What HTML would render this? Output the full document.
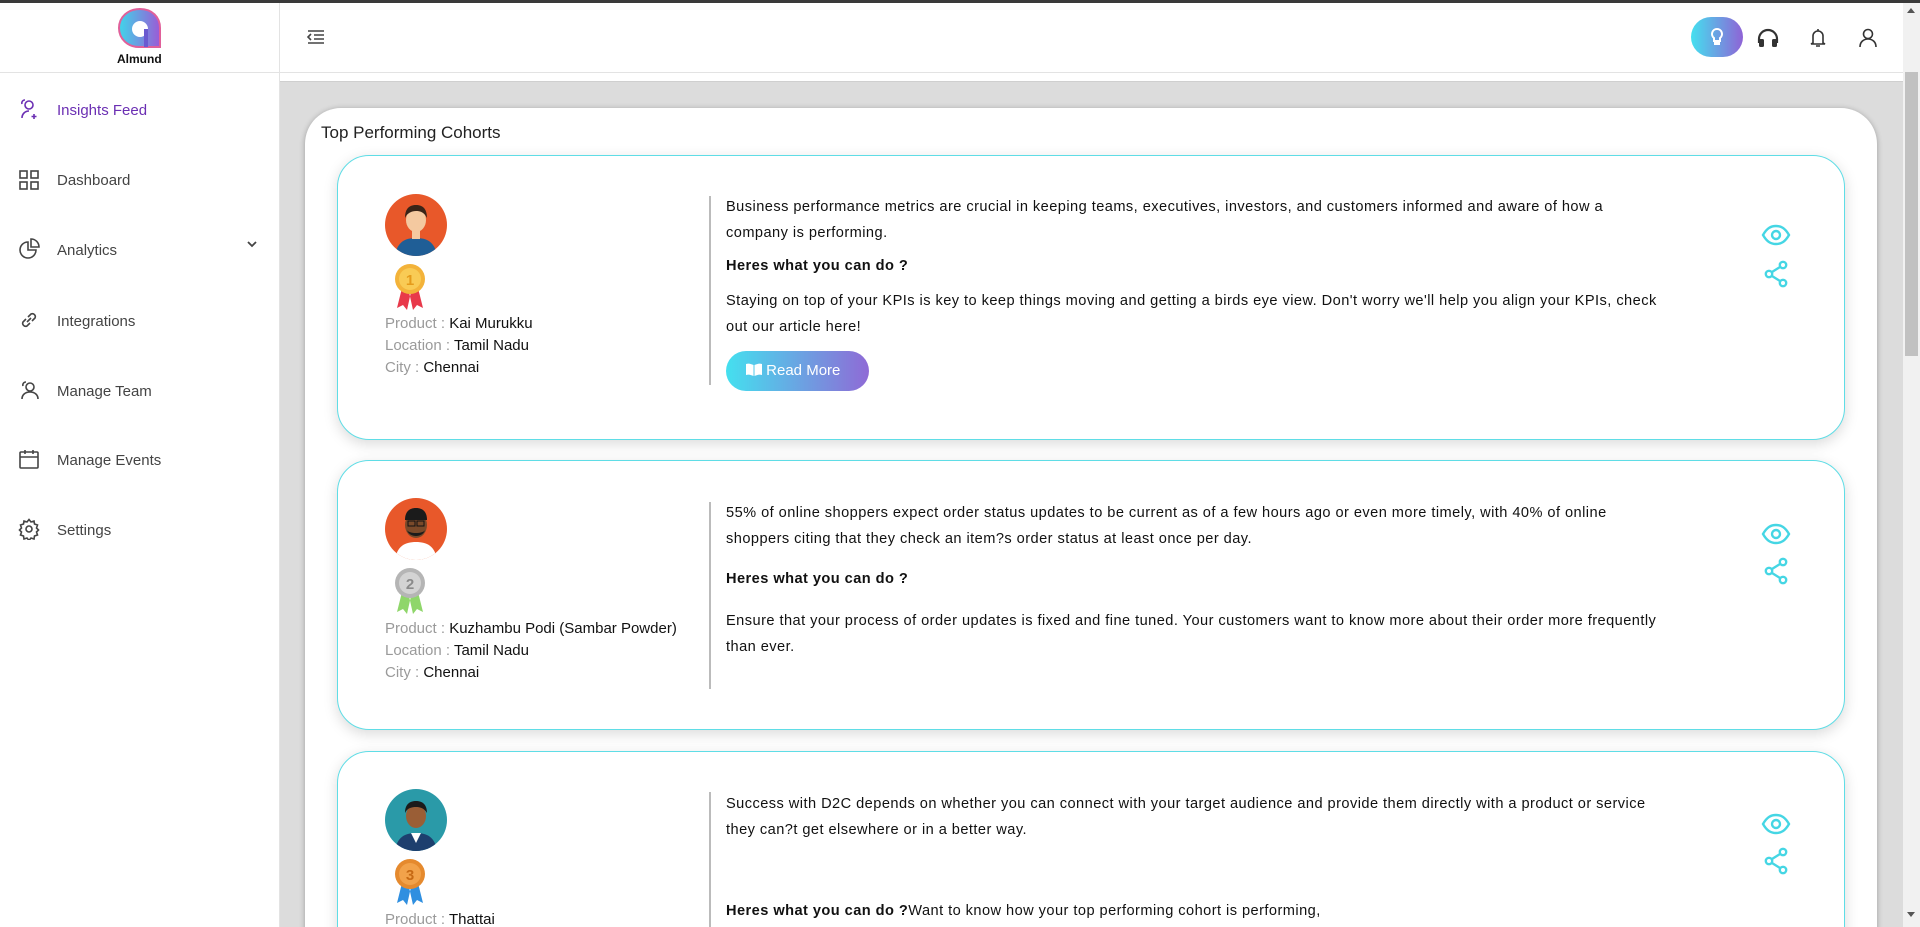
<!DOCTYPE html>
<html><head><meta charset="utf-8"><style>
*{margin:0;padding:0;box-sizing:border-box}
html,body{width:1920px;height:927px;overflow:hidden}
body{font-family:"Liberation Sans",sans-serif;background:#fff;position:relative;color:#222}
#w{position:absolute;left:0;top:0;width:1920px;height:927px;overflow:hidden}
.a{position:absolute}
.nav{position:absolute;left:57px;font-size:15px;color:#444;line-height:18px}
.ni{position:absolute;left:18px;width:22px;height:22px}
.card{position:absolute;left:337px;width:1508px;background:#fff;border:1.5px solid #5fdde6;border-radius:32px;box-shadow:0 4px 14px rgba(0,0,0,.15)}
.info{position:absolute;font-size:15px;line-height:22px;color:#111;white-space:nowrap}
.info span{color:#9a9a9a}
.txt{position:absolute;left:726px;font-size:14.6px;color:#111;white-space:nowrap;line-height:26px;letter-spacing:.45px}
.b{font-weight:bold}
.div{position:absolute;left:709px;width:1.5px;background:#bbb}
</style></head><body><div id="w">
<div class="a" style="left:0;top:0;width:1920px;height:3px;background:#3a3a3a"></div>
<div class="a" style="left:0;top:72px;width:1903px;height:1px;background:#e3e3e3"></div>
<div class="a" style="left:279px;top:3px;width:1px;height:924px;background:#e3e3e3"></div>
<svg class="a" style="left:116px;top:7px" width="48" height="46" viewBox="0 0 48 46">
<defs><linearGradient id="lg" x1="0" x2="1"><stop offset="0" stop-color="#3fd6ea"/><stop offset="1" stop-color="#9b5ad6"/></linearGradient></defs>
<path d="M24 2C12 2 3 10 3 21c0 11 9 19 20 19h21V21C44 10 36 2 24 2z" fill="url(#lg)" stroke="#e0609a" stroke-width="2"/>
<circle cx="24" cy="22" r="8" fill="#fff"/><rect x="28" y="22" width="4" height="18" fill="#6a5ad0"/>
</svg>
<div class="a" style="left:117px;top:52px;font-size:12px;font-weight:bold;color:#111">Almund</div>
<svg class="a" style="left:307px;top:30px" width="18" height="14" viewBox="0 0 18 14" stroke="#444" stroke-width="1.6" fill="none"><path d="M1 1h16M7 5h10M7 9h10M1 13h16M4 4L1 7l3 3"/></svg>
<div class="a" style="left:1691px;top:17px;width:52px;height:40px;border-radius:20px;background:linear-gradient(90deg,#44e0ef,#8f63d6)"></div>
<svg class="a" style="left:1709px;top:27px" width="16" height="20" viewBox="0 0 16 20"><path d="M8 2a5 5 0 0 0-3 9v3h6v-3a5 5 0 0 0-3-9z" fill="none" stroke="#fff" stroke-width="2"/><rect x="5" y="15" width="6" height="3" fill="#fff"/></svg>
<svg class="a" style="left:1757px;top:28px" width="22" height="20" viewBox="0 0 22 20"><path d="M2 15v-4a9 9 0 0 1 18 0v4" fill="none" stroke="#333" stroke-width="2.2"/><rect x="2" y="11" width="5" height="8" rx="1.5" fill="#333"/><rect x="15" y="11" width="5" height="8" rx="1.5" fill="#333"/></svg>
<svg class="a" style="left:1809px;top:28px" width="18" height="20" viewBox="0 0 18 20" fill="none" stroke="#333" stroke-width="1.6"><path d="M4 15V8a5 5 0 0 1 10 0v7l2 1H2zM7 18h4M9 1v2"/></svg>
<svg class="a" style="left:1858px;top:28px" width="20" height="20" viewBox="0 0 20 20" fill="none" stroke="#333" stroke-width="1.6"><circle cx="10" cy="6" r="4.5"/><path d="M2 19c0-5 3.5-8 8-8s8 3 8 8"/></svg>
<div class="a" style="left:1903px;top:3px;width:17px;height:924px;background:#f1f1f1"></div>
<div class="a" style="left:1905px;top:72px;width:13px;height:284px;background:#c1c1c1"></div>
<div class="a" style="left:1907px;top:8px;width:0;height:0;border-left:4px solid transparent;border-right:4px solid transparent;border-bottom:5px solid #555"></div>
<div class="a" style="left:1907px;top:912px;width:0;height:0;border-left:4px solid transparent;border-right:4px solid transparent;border-top:5px solid #555"></div>
<div class="a" style="left:280px;top:81px;width:1623px;height:846px;background:#dcdcdc;border-top:1px solid #cfcfcf"></div>
<div class="a" style="left:305px;top:108px;width:1572px;height:860px;background:#fff;border-radius:36px;box-shadow:0 1px 6px rgba(0,0,0,.3)"></div>
<div class="a" style="left:321px;top:123px;font-size:17px;color:#222">Top Performing Cohorts</div>
<svg class="ni" style="top:98px" viewBox="0 0 22 22" fill="none" stroke="#6b2fb3" stroke-width="1.6"><circle cx="11" cy="7" r="4"/><path d="M4 20c0-4 3-7 7-7M4 6a3 3 0 0 1 3-4M16 16v5M13.5 18.5h5"/></svg>
<div class="nav" style="top:102px;color:#6b2fb3">Insights Feed</div>
<svg class="ni" style="top:169px" viewBox="0 0 22 22" fill="none" stroke="#444" stroke-width="1.6"><rect x="2" y="2" width="7" height="7"/><rect x="13" y="2" width="7" height="7"/><rect x="2" y="13" width="7" height="7"/><rect x="13" y="13" width="7" height="7"/></svg>
<div class="nav" style="top:172px">Dashboard</div>
<svg class="ni" style="top:238px" viewBox="0 0 22 22" fill="none" stroke="#444" stroke-width="1.6"><path d="M10 4a8 8 0 1 0 8 8h-8z"/><path d="M13 1v8h8a8 8 0 0 0-8-8z"/></svg>
<div class="nav" style="top:242px">Analytics</div>
<svg class="a" style="left:247px;top:240px" width="10" height="8" viewBox="0 0 10 8" fill="none" stroke="#444" stroke-width="1.8"><path d="M1 2l4 4 4-4"/></svg>
<svg class="ni" style="top:309px" viewBox="0 0 22 22" fill="none" stroke="#444" stroke-width="1.6"><path d="M9 13l4-4M8 10l-3 3a3 3 0 0 0 4 4l3-3M14 12l3-3a3 3 0 0 0-4-4l-3 3"/></svg>
<div class="nav" style="top:313px">Integrations</div>
<svg class="ni" style="top:379px" viewBox="0 0 22 22" fill="none" stroke="#444" stroke-width="1.6"><circle cx="12" cy="8" r="4"/><path d="M4 20c0-4 3-7 8-7s8 3 8 7M5 7a3 3 0 0 1 3-4"/></svg>
<div class="nav" style="top:383px">Manage Team</div>
<svg class="ni" style="top:448px" viewBox="0 0 22 22" fill="none" stroke="#444" stroke-width="1.6"><rect x="2" y="4" width="18" height="16" rx="1"/><path d="M2 9h18M7 2v4M15 2v4"/></svg>
<div class="nav" style="top:452px">Manage Events</div>
<svg class="ni" style="top:518px" viewBox="0 0 22 22" fill="none" stroke="#444" stroke-width="1.6"><circle cx="11" cy="11" r="3"/><path d="M11 1.5l2 2.5 3-1 .5 3 3 1-1 3 2 2-2 2 1 3-3 1-.5 3-3-1-2 2.5-2-2.5-3 1-.5-3-3-1 1-3-2-2 2-2-1-3 3-1 .5-3 3 1z"/></svg>
<div class="nav" style="top:522px">Settings</div>

<div class="card" style="top:155px;height:285px"></div>
<svg class="a" style="left:385px;top:194px" width="62" height="62" viewBox="0 0 62 62"><clipPath id="c1"><circle cx="31" cy="31" r="31"/></clipPath><g clip-path="url(#c1)"><rect width="62" height="62" fill="#e8582a"/><path d="M10 62c2-14 10-18 21-18s19 4 21 18z" fill="#1f5e96"/><rect x="27" y="36" width="8" height="9" fill="#f4c9a0"/><ellipse cx="31" cy="26" rx="10" ry="12" fill="#f4c9a0"/><path d="M20 24c0-10 5-13 11-13s11 3 11 13c-3-6-7-7-11-7s-9 2-11 7z" fill="#3a2418"/></g></svg>
<svg class="a" style="left:394px;top:262px" width="32" height="50" viewBox="0 0 32 50"><path d="M8 26l-5 20 6-3 4 5 4-18zM24 26l5 20-6-3-4 5-4-18z" fill="#e8394a"/><circle cx="16" cy="17" r="15" fill="#f3b33a"/><circle cx="16" cy="17" r="11" fill="#f9cb55"/><text x="16" y="23" font-size="15" text-anchor="middle" fill="#e59b1b" font-family="Liberation Sans" font-weight="bold">1</text></svg>
<div class="info" style="left:385px;top:313px"><span>Product : </span>Kai Murukku<br><span>Location : </span>Tamil Nadu<br><span>City : </span>Chennai</div>
<div class="div" style="top:196px;height:189px"></div>
<div class="txt" style="top:194px">Business performance metrics are crucial in keeping teams, executives, investors, and customers informed and aware of how a<br>company is performing.</div>
<div class="txt b" style="top:253px">Heres what you can do ?</div>
<div class="txt" style="top:288px">Staying on top of your KPIs is key to keep things moving and getting a birds eye view. Don't worry we'll help you align your KPIs, check<br>out our article here!</div>
<div class="a" style="left:726px;top:351px;width:143px;height:40px;border-radius:20px;background:linear-gradient(90deg,#44e0ef,#8f6ad6);color:#fff;font-size:15px;line-height:40px;padding-left:20px"><svg width="16" height="13" viewBox="0 0 16 13" style="vertical-align:-1px"><path d="M0 1c3-1 5 0 7.5 1v11C5 12 3 11 0 12zM16 1c-3-1-5 0-7.5 1v11c2.5-1 4.5-2 7.5-1z" fill="#fff"/></svg> Read More</div>

<div class="card" style="top:460px;height:270px"></div>
<svg class="a" style="left:385px;top:498px" width="62" height="62" viewBox="0 0 62 62"><clipPath id="c2"><circle cx="31" cy="31" r="31"/></clipPath><g clip-path="url(#c2)"><rect width="62" height="62" fill="#e8582a"/><path d="M10 62c2-14 10-18 21-18s19 4 21 18z" fill="#fff"/><ellipse cx="31" cy="27" rx="11" ry="13" fill="#7a4a2a"/><path d="M20 22c0-9 5-12 11-12s11 3 11 12z" fill="#1b1b1b"/><path d="M22 32c2 8 16 8 18 0c-2 4-16 4-18 0z" fill="#1b1b1b"/><rect x="23" y="23" width="7" height="5" fill="none" stroke="#111"/><rect x="32" y="23" width="7" height="5" fill="none" stroke="#111"/></g></svg>
<svg class="a" style="left:394px;top:566px" width="32" height="50" viewBox="0 0 32 50"><path d="M8 26l-5 20 6-3 4 5 4-18zM24 26l5 20-6-3-4 5-4-18z" fill="#8fd66a"/><circle cx="16" cy="17" r="15" fill="#b5b5b5"/><circle cx="16" cy="17" r="11" fill="#d3d3d3"/><text x="16" y="23" font-size="15" text-anchor="middle" fill="#8a8a8a" font-family="Liberation Sans" font-weight="bold">2</text></svg>
<div class="info" style="left:385px;top:618px"><span>Product : </span>Kuzhambu Podi (Sambar Powder)<br><span>Location : </span>Tamil Nadu<br><span>City : </span>Chennai</div>
<div class="div" style="top:502px;height:187px"></div>
<div class="txt" style="top:500px">55% of online shoppers expect order status updates to be current as of a few hours ago or even more timely, with 40% of online<br>shoppers citing that they check an item?s order status at least once per day.</div>
<div class="txt b" style="top:566px">Heres what you can do ?</div>
<div class="txt" style="top:608px">Ensure that your process of order updates is fixed and fine tuned. Your customers want to know more about their order more frequently<br>than ever.</div>

<div class="card" style="top:751px;height:220px"></div>
<svg class="a" style="left:385px;top:789px" width="62" height="62" viewBox="0 0 62 62"><clipPath id="c3"><circle cx="31" cy="31" r="31"/></clipPath><g clip-path="url(#c3)"><rect width="62" height="62" fill="#2a9aa8"/><path d="M10 62c2-14 10-18 21-18s19 4 21 18z" fill="#1d3f6e"/><path d="M26 44l5 10 5-10z" fill="#fff"/><ellipse cx="31" cy="27" rx="10" ry="12" fill="#9a5e36"/><path d="M20 24c0-9 5-12 11-12s11 3 11 12c-3-5-7-6-11-6s-9 1-11 6z" fill="#1b1b1b"/></g></svg>
<svg class="a" style="left:394px;top:857px" width="32" height="50" viewBox="0 0 32 50"><path d="M8 26l-5 20 6-3 4 5 4-18zM24 26l5 20-6-3-4 5-4-18z" fill="#2f8fe0"/><circle cx="16" cy="17" r="15" fill="#e58a2e"/><circle cx="16" cy="17" r="11" fill="#f2a24a"/><text x="16" y="23" font-size="15" text-anchor="middle" fill="#c76a14" font-family="Liberation Sans" font-weight="bold">3</text></svg>
<div class="info" style="left:385px;top:909px"><span>Product : </span>Thattai</div>
<div class="div" style="top:792px;height:140px"></div>
<div class="txt" style="top:791px">Success with D2C depends on whether you can connect with your target audience and provide them directly with a product or service<br>they can?t get elsewhere or in a better way.</div>
<div class="txt" style="top:898px"><b>Heres what you can do ?</b>Want to know how your top performing cohort is performing,</div>

<svg class="a" style="left:1761px;top:222px" width="30" height="66" viewBox="0 0 30 66" fill="none" stroke="#45d6e4" stroke-width="2.4"><path d="M2 13C6 6 10 4 15 4s9 2 13 9c-4 7-8 9-13 9S6 20 2 13z"/><circle cx="15" cy="13" r="4"/><circle cx="22" cy="43" r="3.2"/><circle cx="8" cy="52" r="3.2"/><circle cx="22" cy="61" r="3.2"/><path d="M11 50l8-5M11 54l8 5"/></svg>
<svg class="a" style="left:1761px;top:521px" width="30" height="66" viewBox="0 0 30 66" fill="none" stroke="#45d6e4" stroke-width="2.4"><path d="M2 13C6 6 10 4 15 4s9 2 13 9c-4 7-8 9-13 9S6 20 2 13z"/><circle cx="15" cy="13" r="4"/><circle cx="22" cy="41" r="3.2"/><circle cx="8" cy="50" r="3.2"/><circle cx="22" cy="59" r="3.2"/><path d="M11 48l8-5M11 52l8 5"/></svg>
<svg class="a" style="left:1761px;top:811px" width="30" height="66" viewBox="0 0 30 66" fill="none" stroke="#45d6e4" stroke-width="2.4"><path d="M2 13C6 6 10 4 15 4s9 2 13 9c-4 7-8 9-13 9S6 20 2 13z"/><circle cx="15" cy="13" r="4"/><circle cx="22" cy="41" r="3.2"/><circle cx="8" cy="50" r="3.2"/><circle cx="22" cy="59" r="3.2"/><path d="M11 48l8-5M11 52l8 5"/></svg>
</div></body></html>
